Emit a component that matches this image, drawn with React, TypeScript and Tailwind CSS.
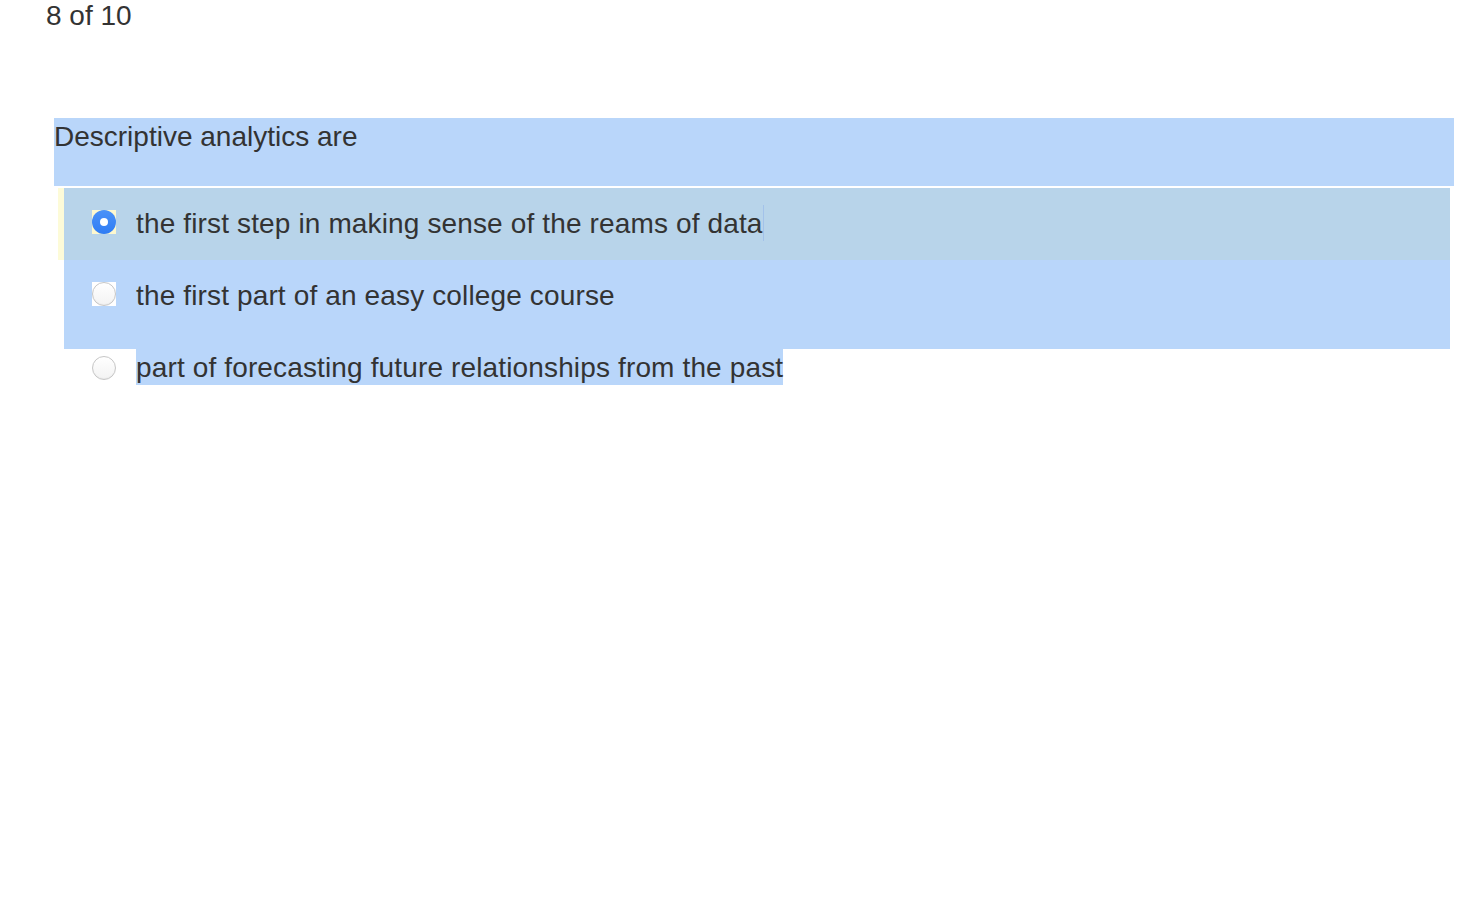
import React from 'react'

function Radio({ checked, backing }: { checked?: boolean; backing?: string }) {
  return (
    <div className={`w-6 h-6 shrink-0 ${backing ?? ''}`}>
      {checked ? (
        <div className="w-6 h-6 rounded-full bg-linear-to-b from-[#4a92f8] to-[#2f7cf4] flex items-center justify-center">
          <div className="w-[8px] h-[8px] rounded-full bg-white" />
        </div>
      ) : (
        <div className="w-6 h-6 rounded-full border border-[#c6c6c6] bg-linear-to-b from-white to-[#f3f3f3] shadow-[inset_0_-1px_1px_rgba(0,0,0,0.04)]" />
      )}
    </div>
  )
}

export default function App() {
  return (
    <div className="w-full h-[910px] bg-white text-[#333333] text-[28px] leading-[32px] font-['Liberation_Sans',Arial,sans-serif]">
      {/* Counter */}
      <div className="pl-[46px] h-[32px]">8 of 10</div>

      {/* Question */}
      <div className="mt-[86px] ml-[54px] w-[1400px] h-[68px] pt-[3px] bg-[#b9d6fa]">
        Descriptive analytics are
      </div>

      {/* Answers */}
      <div className="mt-[2px] ml-[58px] w-[1392px] tracking-[0.14px]">
        <div className="flex h-[72px]">
          <div className="w-[6px] bg-[#fdfbd8]" />
          <div className="flex-1 flex items-start bg-[#b8d4ea] pl-[28px]">
            <div className="pt-[22px]">
              <Radio checked backing="bg-[#fdf8cf]" />
            </div>
            <div className="pl-[20px] pt-[20px]">the first step in making sense of the reams of data</div>
            <div className="mt-[17px] w-px h-[36px] bg-[#a3c2ea]" />
          </div>
        </div>

        <div className="ml-[6px] h-[89px] flex items-start bg-[#b9d6fa] pl-[28px]">
          <div className="pt-[22px]">
            <Radio backing="bg-white" />
          </div>
          <div className="pl-[20px] pt-[20px]">the first part of an easy college course</div>
        </div>

        <div className="ml-[6px] flex items-start pl-[28px]">
          <div className="pt-[7px]">
            <Radio />
          </div>
          <div className="ml-[20px] h-[36px] pt-[3px] bg-[#b9d6fa]">
            part of forecasting future relationships from the past
          </div>
        </div>
      </div>
    </div>
  )
}
